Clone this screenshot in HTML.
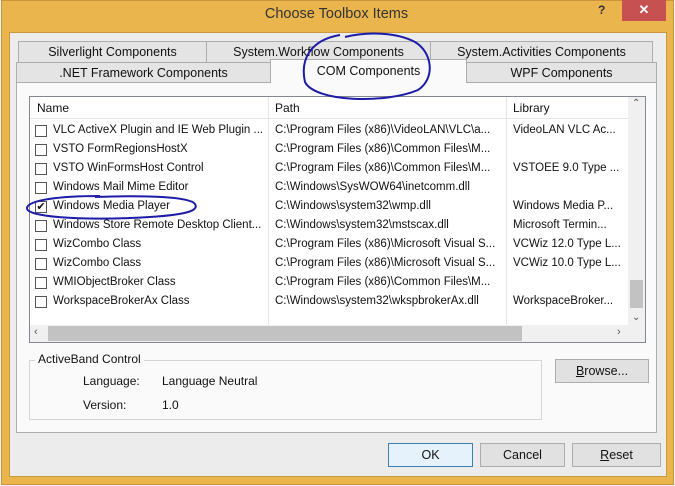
<!DOCTYPE html><html><head><style>
*{margin:0;padding:0;box-sizing:border-box}
body{width:675px;height:486px;background:#f4f4f4;position:relative;overflow:hidden;font-family:"Liberation Sans",sans-serif;font-size:12px;color:#111}
.a{position:absolute}
.frame{left:1px;top:0;width:673px;height:485px;background:#eab54c;border:1px solid #c8963a}
.inner{left:9px;top:32px;width:658px;height:445px;background:#ececec;border:1px solid #c89a40}
.tab{position:absolute;background:#e4e4e4;border:1px solid #adadad;text-align:center;line-height:20px;font-size:12.5px}
.panel{left:16px;top:82px;width:641px;height:351px;background:#fafafa;border:1px solid #adadad}
.row{position:absolute;left:30px;height:19px;line-height:19px;white-space:nowrap;font-size:11.5px}
.cb{position:absolute;left:5px;top:4px;width:12px;height:12px;border:1px solid #555;background:#fff}
.btn{position:absolute;background:#e1e1e1;border:1px solid #adadad;text-align:center;line-height:22px;font-size:12.5px}
</style></head><body>
<div class="a frame"></div>
<div class="a" style="left:-1px;top:6px;width:675px;text-align:center;font-size:14.5px;color:#333">Choose Toolbox Items</div>
<div class="a" style="left:598px;top:3px;font-size:12px;font-weight:bold;color:#333">?</div>
<div class="a" style="left:622px;top:0;width:44px;height:21px;background:#c75050;color:#fff;text-align:center;font-size:13px;line-height:20px;font-weight:bold">✕</div>
<div class="a inner"></div>
<div class="tab" style="left:18px;top:41px;width:189px;height:22px">Silverlight Components</div>
<div class="tab" style="left:206px;top:41px;width:225px;height:22px">System.Workflow Components</div>
<div class="tab" style="left:430px;top:41px;width:223px;height:22px">System.Activities Components</div>
<div class="a panel"></div>
<div class="tab" style="left:16px;top:62px;width:255px;height:21px">.NET Framework Components</div>
<div class="tab" style="left:466px;top:62px;width:191px;height:21px">WPF Components</div>
<div class="tab" style="left:270px;top:59px;width:197px;height:24px;background:#fafafa;border-bottom:none;line-height:22px">COM Components</div>
<div class="a" style="left:29px;top:96px;width:617px;height:247px;background:#fff;border:1px solid #828790"></div>
<div class="a" style="left:30px;top:97px;width:598px;height:22px;border-bottom:1px solid #e5e5e5"></div>
<div class="a" style="left:268px;top:97px;width:1px;height:228px;background:#e5e5e5"></div>
<div class="a" style="left:506px;top:97px;width:1px;height:228px;background:#e5e5e5"></div>
<div class="a" style="left:37px;top:101px">Name</div>
<div class="a" style="left:275px;top:101px">Path</div>
<div class="a" style="left:513px;top:101px">Library</div>
<div class="a" style="left:628px;top:97px;width:17px;height:228px;background:#f0f0f0"></div>
<div class="a" style="left:630px;top:280px;width:13px;height:28px;background:#c2c2c2"></div>
<div class="a" style="left:632px;top:98px;font-size:10px;color:#555">&#8963;</div>
<div class="a" style="left:632px;top:312px;font-size:10px;color:#555">&#8964;</div>
<div class="a" style="left:30px;top:325px;width:615px;height:17px;background:#f0f0f0"></div>
<div class="a" style="left:48px;top:326px;width:474px;height:15px;background:#c2c2c2"></div>
<div class="a" style="left:34px;top:326px;font-size:11px;color:#555">&lsaquo;</div>
<div class="a" style="left:617px;top:326px;font-size:11px;color:#555">&rsaquo;</div>
<div class="a" style="left:0;top:121px;width:675px">
<div class="row" style="top:0"><div class="cb"></div><span style="position:absolute;left:23px">VLC ActiveX Plugin and IE Web Plugin ...</span><span style="position:absolute;left:245px">C:\Program Files (x86)\VideoLAN\VLC\a...</span><span style="position:absolute;left:483px">VideoLAN VLC Ac...</span></div>
<div class="row" style="top:19px"><div class="cb"></div><span style="position:absolute;left:23px">VSTO FormRegionsHostX</span><span style="position:absolute;left:245px">C:\Program Files (x86)\Common Files\M...</span></div>
<div class="row" style="top:38px"><div class="cb"></div><span style="position:absolute;left:23px">VSTO WinFormsHost Control</span><span style="position:absolute;left:245px">C:\Program Files (x86)\Common Files\M...</span><span style="position:absolute;left:483px">VSTOEE 9.0 Type ...</span></div>
<div class="row" style="top:57px"><div class="cb"></div><span style="position:absolute;left:23px">Windows Mail Mime Editor</span><span style="position:absolute;left:245px">C:\Windows\SysWOW64\inetcomm.dll</span></div>
<div class="row" style="top:76px"><div class="cb" style="font-size:11px;line-height:10px;text-align:center">✔</div><span style="position:absolute;left:23px">Windows Media Player</span><span style="position:absolute;left:245px">C:\Windows\system32\wmp.dll</span><span style="position:absolute;left:483px">Windows Media P...</span></div>
<div class="row" style="top:95px"><div class="cb"></div><span style="position:absolute;left:23px">Windows Store Remote Desktop Client...</span><span style="position:absolute;left:245px">C:\Windows\system32\mstscax.dll</span><span style="position:absolute;left:483px">Microsoft Termin...</span></div>
<div class="row" style="top:114px"><div class="cb"></div><span style="position:absolute;left:23px">WizCombo Class</span><span style="position:absolute;left:245px">C:\Program Files (x86)\Microsoft Visual S...</span><span style="position:absolute;left:483px">VCWiz 12.0 Type L...</span></div>
<div class="row" style="top:133px"><div class="cb"></div><span style="position:absolute;left:23px">WizCombo Class</span><span style="position:absolute;left:245px">C:\Program Files (x86)\Microsoft Visual S...</span><span style="position:absolute;left:483px">VCWiz 10.0 Type L...</span></div>
<div class="row" style="top:152px"><div class="cb"></div><span style="position:absolute;left:23px">WMIObjectBroker Class</span><span style="position:absolute;left:245px">C:\Program Files (x86)\Common Files\M...</span></div>
<div class="row" style="top:171px"><div class="cb"></div><span style="position:absolute;left:23px">WorkspaceBrokerAx Class</span><span style="position:absolute;left:245px">C:\Windows\system32\wkspbrokerAx.dll</span><span style="position:absolute;left:483px">WorkspaceBroker...</span></div>
</div>
<div class="a" style="left:29px;top:360px;width:513px;height:60px;border:1px solid #d5d5d5"></div>
<div class="a" style="left:35px;top:352px;background:#fafafa;padding:0 3px">ActiveBand Control</div>
<div class="a" style="left:83px;top:374px">Language:</div>
<div class="a" style="left:162px;top:374px">Language Neutral</div>
<div class="a" style="left:83px;top:398px">Version:</div>
<div class="a" style="left:162px;top:398px">1.0</div>
<div class="btn" style="left:555px;top:359px;width:94px;height:24px"><u>B</u>rowse...</div>
<div class="btn" style="left:388px;top:443px;width:85px;height:24px;border-color:#3c7fb1;background:#e5f1fb">OK</div>
<div class="btn" style="left:480px;top:443px;width:85px;height:24px">Cancel</div>
<div class="btn" style="left:572px;top:443px;width:89px;height:24px"><u>R</u>eset</div>
<svg class="a" style="left:0;top:0" width="675" height="486"><g fill="none" stroke="#1c1ca8" stroke-width="2">
<path d="M340 35 C310 40 300 60 305 82 C315 102 385 104 418 90 C436 78 432 52 415 42 C398 33 370 31 345 37"/>
<path d="M100 196 C60 196 28 200 27 208 C26 217 80 220 130 218 C180 216 200 212 195 204 C190 197 150 195 95 197"/>
</g></svg>
</body></html>
